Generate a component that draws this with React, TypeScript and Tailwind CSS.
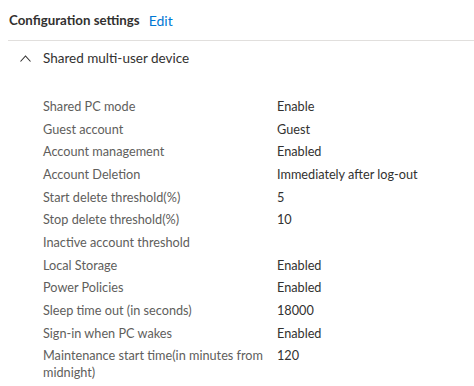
const rows: [string, string][] = [
  ['Shared PC mode', 'Enable'],
  ['Guest account', 'Guest'],
  ['Account management', 'Enabled'],
  ['Account Deletion', 'Immediately after log-out'],
  ['Start delete threshold(%)', '5'],
  ['Stop delete threshold(%)', '10'],
  ['Inactive account threshold', ''],
  ['Local Storage', 'Enabled'],
  ['Power Policies', 'Enabled'],
  ['Sleep time out (in seconds)', '18000'],
  ['Sign-in when PC wakes', 'Enabled'],
  ['Maintenance start time(in minutes from midnight)', '120'],
];

export default function App() {
  return (
    <div
      className="w-[474px] h-[386px] overflow-hidden bg-white"
      style={{ fontFamily: 'Lato, "Open Sans", sans-serif' }}
    >
      <div className="pl-[9px] pt-[11px] h-[40px] flex items-start gap-[9px] text-[13.3px] leading-[19px]">
        <span className="font-bold text-[#323130]">Configuration settings</span>
        <span className="text-[14px] text-[#0078d4]">Edit</span>
      </div>
      <div className="ml-[8px] border-t border-[#e1dfdd]" />
      <div className="flex items-center pl-[20px] pt-[2px] h-[33px] gap-[12px]">
        <svg width="11" height="7" viewBox="0 0 11 7" fill="none">
          <path d="M0.5 6.5 L5.5 1 L10.5 6.5" stroke="#323130" strokeWidth="1.1" />
        </svg>
        <span className="text-[13.5px] leading-[19px] text-[#323130]">Shared multi-user device</span>
      </div>
      <div className="pl-[43px] pt-[21px] text-[12.7px] leading-[17px]">
        {rows.map(([label, value]) => (
          <div key={label} className="flex py-[2.85px]">
            <div className="w-[234px] pr-[4px] text-[#605e5c]">{label}</div>
            <div className="text-[#323130]">{value}</div>
          </div>
        ))}
      </div>
    </div>
  );
}
